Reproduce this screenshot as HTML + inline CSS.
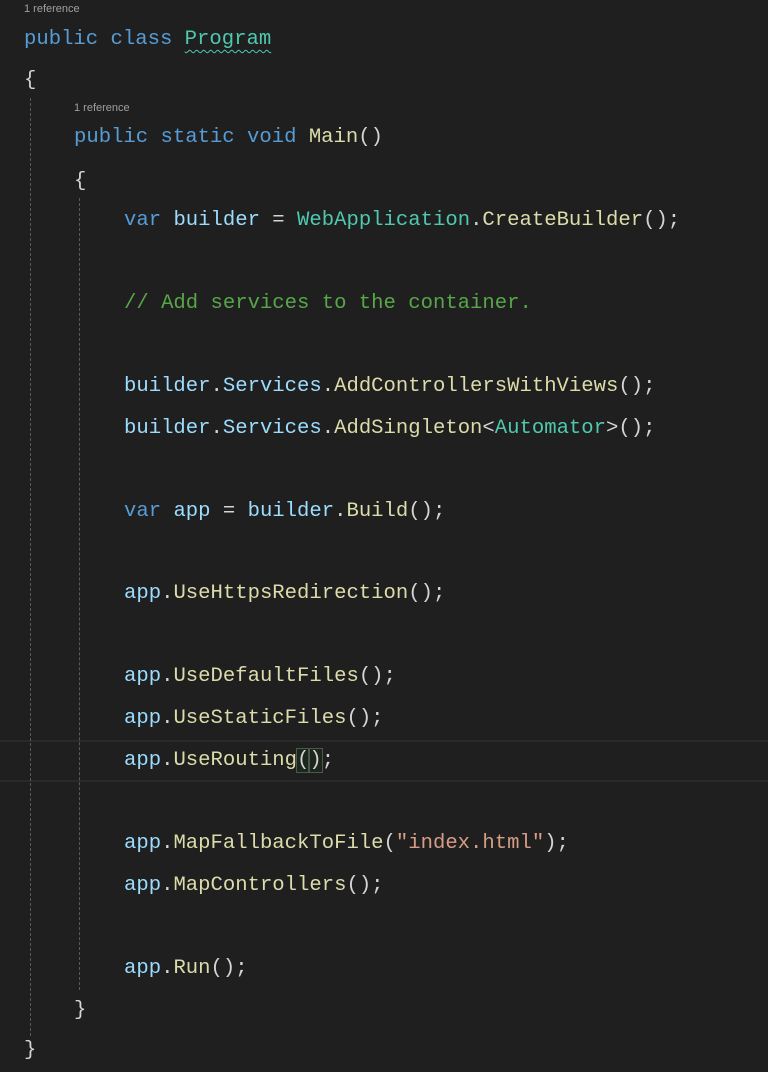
<!DOCTYPE html><html><head><style>
body{margin:0;width:768px;height:1067px;background:#1f1f1f;overflow:hidden;position:relative;font-family:"Liberation Mono",monospace;}
.l{position:absolute;font-size:20.6px;line-height:42px;height:42px;white-space:pre;color:#d4d4d4;margin-top:2px}
.r{position:absolute;font-family:"Liberation Sans",sans-serif;font-size:11px;color:#a0a0a0;line-height:14px}
.k{color:#569cd6}.t{color:#4ec9b0}.m{color:#dcdcaa}.v{color:#9cdcfe}.c{color:#57a64a}.s{color:#d69d85}
.g{position:absolute;border-left:1px dashed #5a5a5a;width:0}
</style></head><body>
<div style="position:absolute;left:0;top:740px;width:768px;height:38px;border-top:2px solid #2a2a2a;border-bottom:2px solid #2a2a2a"></div>
<div class="g" style="left:30px;top:98px;height:938px"></div>
<div class="g" style="left:79px;top:198px;height:792px"></div>
<div class="r" style="left:24px;top:2px">1 reference</div>
<div class="r" style="left:74px;top:101px">1 reference</div>
<div class="l" style="left:24px;top:17px"><span class="k">public class </span><span class="t" style="text-decoration:underline wavy #4ec9b0;text-decoration-thickness:1px;text-underline-offset:5px">Program</span></div>
<div class="l" style="left:24px;top:58px">{</div>
<div class="l" style="left:74px;top:115px"><span class="k">public static void </span><span class="m">Main</span>()</div>
<div class="l" style="left:74px;top:159px">{</div>
<div class="l" style="left:124px;top:198px"><span class="k">var </span><span class="v">builder</span> = <span class="t">WebApplication</span>.<span class="m">CreateBuilder</span>();</div>
<div class="l" style="left:124px;top:281px"><span class="c">// Add services to the container.</span></div>
<div class="l" style="left:124px;top:364px"><span class="v">builder</span>.<span class="v">Services</span>.<span class="m">AddControllersWithViews</span>();</div>
<div class="l" style="left:124px;top:406px"><span class="v">builder</span>.<span class="v">Services</span>.<span class="m">AddSingleton</span>&lt;<span class="t">Automator</span>&gt;();</div>
<div class="l" style="left:124px;top:489px"><span class="k">var </span><span class="v">app</span> = <span class="v">builder</span>.<span class="m">Build</span>();</div>
<div class="l" style="left:124px;top:571px"><span class="v">app</span>.<span class="m">UseHttpsRedirection</span>();</div>
<div class="l" style="left:124px;top:654px"><span class="v">app</span>.<span class="m">UseDefaultFiles</span>();</div>
<div class="l" style="left:124px;top:696px"><span class="v">app</span>.<span class="m">UseStaticFiles</span>();</div>
<div class="l" style="left:124px;top:738px"><span class="v">app</span>.<span class="m">UseRouting</span><span style="outline:1px solid #4a5a4a;background:#1c261c">(</span><span style="outline:1px solid #4a5a4a;background:#1c261c">)</span>;</div>
<div class="l" style="left:124px;top:821px"><span class="v">app</span>.<span class="m">MapFallbackToFile</span>(<span class="s">"index.html"</span>);</div>
<div class="l" style="left:124px;top:863px"><span class="v">app</span>.<span class="m">MapControllers</span>();</div>
<div class="l" style="left:124px;top:946px"><span class="v">app</span>.<span class="m">Run</span>();</div>
<div class="l" style="left:74px;top:988px">}</div>
<div class="l" style="left:24px;top:1028px">}</div>
</body></html>
